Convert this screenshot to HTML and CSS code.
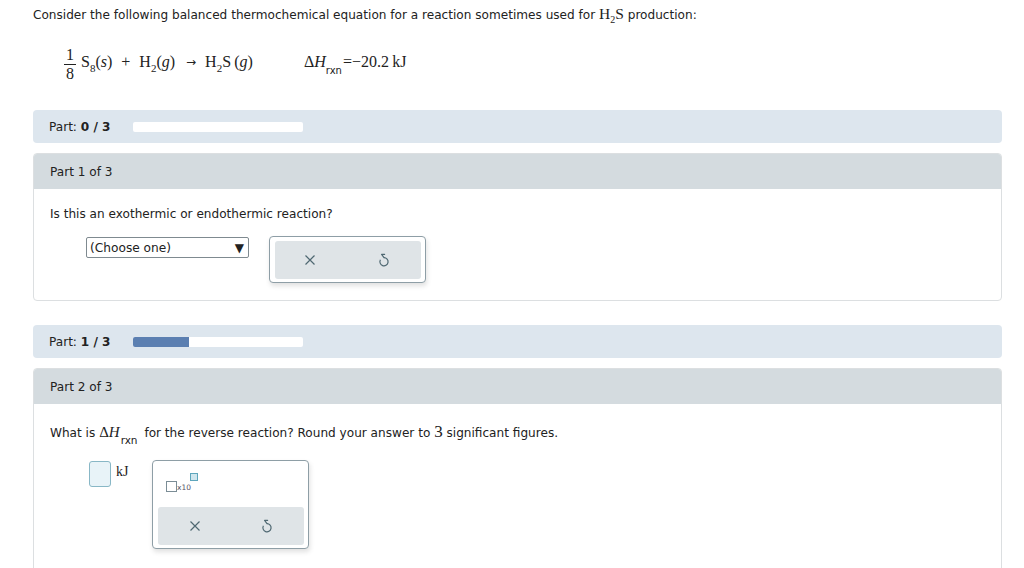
FILE: index.html
```html
<!DOCTYPE html>
<html>
<head>
<meta charset="utf-8">
<link rel="stylesheet" href="styles.css">
</head>
<body>
<div class="page">
  <p class="intro">Consider the following balanced thermochemical equation for a reaction sometimes used for <span class="m hs">H<sub>2</sub>S</span> production:</p>

  <div class="equation">
    <span class="frac"><span class="num">1</span><span class="den">8</span></span>
    <span class="m">S<sub>8</sub>(<i>s</i>)</span>
    <span class="m op">+</span>
    <span class="m">H<sub>2</sub>(<i>g</i>)</span>
    <span class="arrow">&#8594;</span>
    <span class="m">H<sub>2</sub>S&#8201;(<i>g</i>)</span>
    <span class="m dh">&#916;<i>H</i><sub class="rxn">rxn</sub>=&#8722;20.2&#8201;kJ</span>
  </div>

  <div class="progress first">
    <span class="plabel">Part: <b>0 / 3</b></span>
    <span class="pbar"><span class="pfill" style="width:0px"></span></span>
  </div>

  <div class="card card1">
    <div class="card-head">Part 1 of 3</div>
    <div class="card-body">
      <p class="question">Is this an exothermic or endothermic reaction?</p>
      <div class="answer-row">
        <div class="select"><span>(Choose one)</span><span class="tri">&#9660;</span></div>
        <div class="tools">
          <div class="tool-btns">
            <svg class="ico" viewBox="0 0 12 12" width="12" height="12"><path d="M1.5 1.5 L10.5 10.5 M10.5 1.5 L1.5 10.5" stroke="#4f6872" stroke-width="1.2" fill="none"/></svg>
            <svg class="ico" viewBox="0 0 12 14" width="12" height="14"><path d="M6 4.6 A4.1 4.1 0 1 1 2.4 6.7" stroke="#4f6872" stroke-width="1.2" fill="none"/><path d="M3.6 1.4 L6 4.6 M3.6 1.4 L6.6 1.4" stroke="#4f6872" stroke-width="1.2" fill="none" stroke-linecap="round"/></svg>
          </div>
        </div>
      </div>
    </div>
  </div>

  <div class="progress second">
    <span class="plabel">Part: <b>1 / 3</b></span>
    <span class="pbar"><span class="pfill" style="width:56px"></span></span>
  </div>

  <div class="card card2">
    <div class="card-head">Part 2 of 3</div>
    <div class="card-body">
      <p class="question q2">What is <span class="m dh2">&#916;<i>H</i></span><sub class="rxn2">rxn</sub> for the reverse reaction? Round your answer to <span class="m big">3</span> significant figures.</p>
      <div class="answer-row2">
        <div class="unit-input"><span class="box"></span><span class="m kj">kJ</span></div>
        <div class="tools tools2">
          <div class="sci">
            <span class="sci-base"></span><span class="sci-x">x10</span><span class="sci-exp"></span>
          </div>
          <div class="tool-btns">
            <svg class="ico" viewBox="0 0 12 12" width="12" height="12"><path d="M1.5 1.5 L10.5 10.5 M10.5 1.5 L1.5 10.5" stroke="#4f6872" stroke-width="1.2" fill="none"/></svg>
            <svg class="ico" viewBox="0 0 12 14" width="12" height="14"><path d="M6 4.6 A4.1 4.1 0 1 1 2.4 6.7" stroke="#4f6872" stroke-width="1.2" fill="none"/><path d="M3.6 1.4 L6 4.6 M3.6 1.4 L6.6 1.4" stroke="#4f6872" stroke-width="1.2" fill="none" stroke-linecap="round"/></svg>
          </div>
        </div>
      </div>
    </div>
  </div>
</div>
</body>
</html>
```

FILE: styles.css
```css
* { box-sizing: border-box; }
html, body { margin: 0; padding: 0; background: #fff; }
body {
  font-family: Verdana, "DejaVu Sans", sans-serif;
  font-size: 12.1px;
  color: #222;
  overflow: hidden;
}
.page {
  width: 969px;
  margin-left: 33px;
  padding-top: 5px;
}
p { margin: 0; }
.intro { line-height: 18px; }
.m { font-family: "Liberation Serif", "Times New Roman", serif; font-size: 16px; }
.hs { font-size: 15.5px; }
sub { font-size: 10px; vertical-align: -4px; line-height: 0; }

.equation {
  display: flex;
  align-items: center;
  height: 52px;
  margin-top: 12px;
  margin-left: 31px;
  font-family: "Liberation Serif", serif;
  font-size: 16px;
  color: #222;
}
.equation .m { font-size: 16px; }
.equation sub { font-size: 11px; vertical-align: -5px; }
.frac {
  display: inline-flex;
  flex-direction: column;
  align-items: center;
  font-size: 16px;
  line-height: 15px;
  margin-right: 5px;
  margin-top: 4px;
}
.frac .num { border-bottom: 1px solid #222; padding: 0 2px 2px; }
.frac .den { padding-top: 1px; }
.op { margin: 0 9px; }
.arrow { font-size: 12px; margin: 0 9px 0 11px; font-family: "DejaVu Sans", sans-serif; }
.dh { margin-left: 51px; }
.dh sub.rxn { font-family: Verdana, "DejaVu Sans", sans-serif; font-size: 10px; vertical-align: -7px; margin-left: 0; margin-right: 1px; }

.progress {
  display: flex;
  align-items: center;
  height: 33px;
  background: #dde6ee;
  border-radius: 4px;
  padding-left: 16px;
}
.progress.first { margin-top: 22px; }
.progress.second { margin-top: 24px; }
.plabel { width: 84px; }
.plabel b { font-weight: bold; }
.pbar {
  display: block;
  width: 170px;
  height: 10px;
  background: #fff;
  border-radius: 2px;
  overflow: hidden;
}
.pfill { display: block; height: 10px; background: #5b7fb1; }

.card {
  margin-top: 10px;
  border: 1px solid #dcdfe1;
  border-radius: 4px;
  background: #fff;
}
.card-head {
  height: 35px;
  background: #d4dbdf;
  display: flex;
  align-items: center;
  padding-left: 16px;
  border-radius: 3px 3px 0 0;
}
.card-body { padding: 17px 16px 0; }
.card1 { height: 148px; }
.card2 { height: 220px; }
.question { line-height: 16px; }
.q2 { margin-top: 3px; }
.dh2 { font-size: 15px; }
.q2 sub.rxn2 { font-size: 10.5px; vertical-align: -7px; margin-right: 3px; margin-left: 1px; }
.big { font-size: 17px; }

.answer-row {
  display: flex;
  align-items: flex-start;
  margin-top: 14px;
  margin-left: 36px;
}
.select {
  width: 163px;
  height: 21px;
  border: 1px solid #7f8a90;
  border-radius: 2px;
  display: flex;
  justify-content: space-between;
  align-items: center;
  padding: 0 4px 0 3px;
  margin-top: 1px;
  font-size: 12.2px;
}
.tri { font-size: 12px; }
.tools {
  margin-left: 20px;
  width: 157px;
  border: 1px solid #8e9ea6;
  border-radius: 4px;
  background: #fff;
  padding: 4px 4px 3px 5px;
  box-shadow: 1px 3px 5px rgba(0,0,0,0.12);
}
.tool-btns {
  height: 38px;
  background: #dfe4e7;
  border-radius: 3px;
  display: flex;
  align-items: center;
  justify-content: space-between;
  padding: 0 31px 0 29px;
}
.ico { display: block; }

.answer-row2 {
  display: flex;
  align-items: flex-start;
  margin-top: 19px;
  margin-left: 39px;
}
.unit-input { display: flex; align-items: flex-start; width: 63px; padding-top: 1px; }
.box {
  width: 22px;
  height: 26px;
  background: #e8f3f8;
  border: 1px solid #88b7c6;
  border-radius: 3px;
}
.kj { font-size: 14px; margin-left: 5px; margin-top: 3px; }
.tools2 { margin-left: 0; padding-top: 12px; }
.tools2 .tool-btns { padding: 0 31px 0 31px; }
.sci { display: flex; align-items: flex-end; height: 19px; margin-left: 8px; margin-bottom: 15px; }
.sci-base { width: 11px; height: 11px; border: 1.5px solid #7b8d96; }
.sci-x { font-size: 7.5px; color: #556; line-height: 8px; margin-left: 0; }
.sci-exp { width: 8px; height: 8px; border: 1.5px solid #5ea6bc; background: #cfe6ee; align-self: flex-start; margin-left: -1px; }
```
